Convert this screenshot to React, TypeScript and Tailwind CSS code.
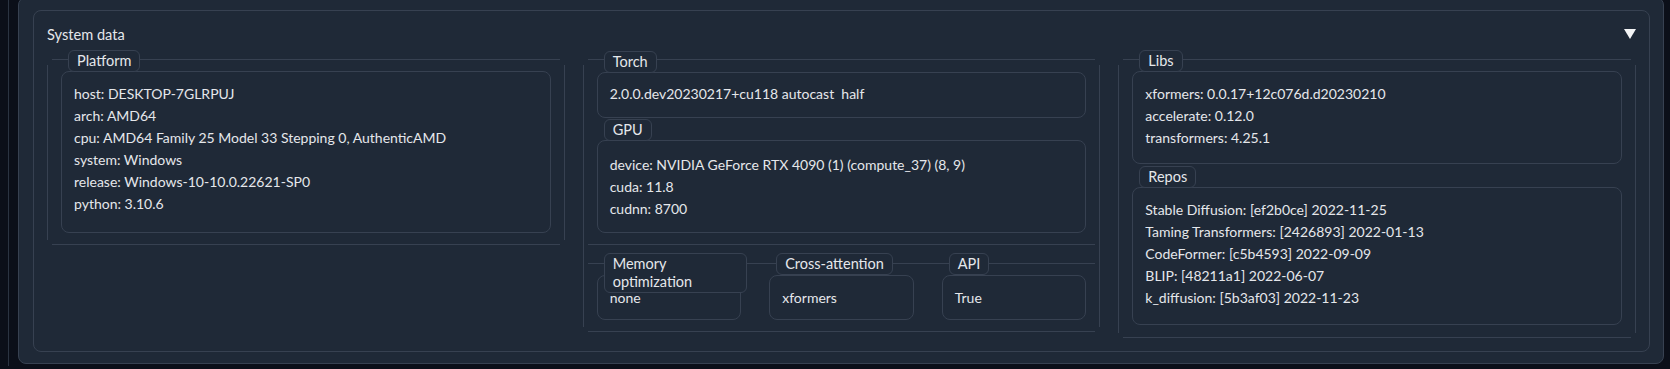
import React from "react";

type BlockProps = {
  label: string;
  children: React.ReactNode;
  className?: string;
  boxClass?: string;
  chipClass?: string;
};

// a labelled value box: the small chip sits over the top edge of the box
function Block({ label, children, className = "", boxClass = "", chipClass = "" }: BlockProps) {
  return (
    <div className={`relative pt-[21px] ${className}`}>
      <div
        className={`absolute left-[7px] top-0 z-10 rounded-md border border-[#374151] bg-[#1f2937] px-[8px] py-[1px] text-[14.5px] leading-[18px] text-[#e5e7eb] ${chipClass}`}
      >
        {label}
      </div>
      <div className={`rounded-lg border border-[#374151] bg-[#1f2937] px-[12px] text-[14px] leading-[22px] text-[#e5e7eb] ${boxClass}`}>
        {children}
      </div>
    </div>
  );
}

function Lines({ items }: { items: string[] }) {
  return (
    <>
      {items.map((t) => (
        <div key={t} className="whitespace-pre">
          {t}
        </div>
      ))}
    </>
  );
}

const platform = [
  "host: DESKTOP-7GLRPUJ",
  "arch: AMD64",
  "cpu: AMD64 Family 25 Model 33 Stepping 0, AuthenticAMD",
  "system: Windows",
  "release: Windows-10-10.0.22621-SP0",
  "python: 3.10.6",
];

const gpu = ["device: NVIDIA GeForce RTX 4090 (1) (compute_37) (8, 9)", "cuda: 11.8", "cudnn: 8700"];

const libs = ["xformers: 0.0.17+12c076d.d20230210", "accelerate: 0.12.0", "transformers: 4.25.1"];

const repos = [
  "Stable Diffusion: [ef2b0ce] 2022-11-25",
  "Taming Transformers: [2426893] 2022-01-13",
  "CodeFormer: [c5b4593] 2022-09-09",
  "BLIP: [48211a1] 2022-06-07",
  "k_diffusion: [5b3af03] 2022-11-23",
];

export default function App() {
  return (
    <div className="h-[369px] w-[1670px] overflow-hidden bg-[#0b0f19] pl-[8px] font-['Lato',sans-serif] text-[#e5e7eb]">
      <div className="h-full border-l border-[#2b3442] pl-[9px] pr-[6px]">
        <div className="-mt-[3px] rounded-lg border border-[#374151] bg-[#1f2937] pb-[11px] pl-[14px] pr-[13px] pt-[12px]">
          <div className="rounded-lg border border-[#374151] px-[13px] pb-[18px]">
            <div className="flex h-[54px] items-start justify-between pt-[13px]">
              <span className="text-[14.6px] leading-[22px]">System data</span>
              <svg width="12" height="10" viewBox="0 0 12 10" className="mt-[5px]">
                <polygon points="0,0 12,0 6,10" fill="#f3f4f6" />
              </svg>
            </div>

            <div className="grid grid-cols-3 items-start gap-x-[18px]">
              {/* left column */}
              <div className="border-x border-[#374151]">
                <div className="-mb-[5px] -mt-[6px] mx-[4px] border-y border-[#374151] px-[9px] pb-[11px]">
                  <Block label="Platform" className="-mt-[10px]" boxClass="pt-[11px] pb-[17px]">
                    <Lines items={platform} />
                  </Block>
                </div>
              </div>

              {/* middle column */}
              <div className="border-x border-[#374151]">
                <div className="-mt-[6px] mx-[4px] border-y border-[#374151] px-[9px] pb-[11px]">
                  <Block label="Torch" className="-mt-[9px]" boxClass="pt-[10px] pb-[12px]">
                    <Lines items={["2.0.0.dev20230217+cu118 autocast  half"]} />
                  </Block>
                  <Block label="GPU" className="mt-[1px]" boxClass="pt-[13px] pb-[12px]">
                    <Lines items={gpu} />
                  </Block>
                </div>
                <div className="-mb-[5px] mt-[18px] mx-[4px] border-y border-[#374151] px-[9px] pb-[11px]">
                  <div className="-mt-[11px] grid grid-cols-3 gap-x-[28px]">
                    <Block label="Memory optimization" className="pt-[22px]" chipClass="w-[143px]" boxClass="pt-[11px] pb-[10px]">
                      none
                    </Block>
                    <Block label="Cross-attention" className="pt-[22px]" boxClass="pt-[11px] pb-[10px]">
                      xformers
                    </Block>
                    <Block label="API" className="pt-[22px]" boxClass="pt-[11px] pb-[10px]">
                      True
                    </Block>
                  </div>
                </div>
              </div>

              {/* right column */}
              <div className="border-x border-[#374151]">
                <div className="-mb-[5px] -mt-[6px] mx-[4px] border-y border-[#374151] px-[9px] pb-[12px]">
                  <Block label="Libs" className="-mt-[10px]" boxClass="pt-[11px] pb-[14px]">
                    <Lines items={libs} />
                  </Block>
                  <Block label="Repos" className="mt-[2px]" boxClass="pt-[11px] pb-[15px]">
                    <Lines items={repos} />
                  </Block>
                </div>
              </div>
            </div>
          </div>
        </div>
      </div>
    </div>
  );
}
